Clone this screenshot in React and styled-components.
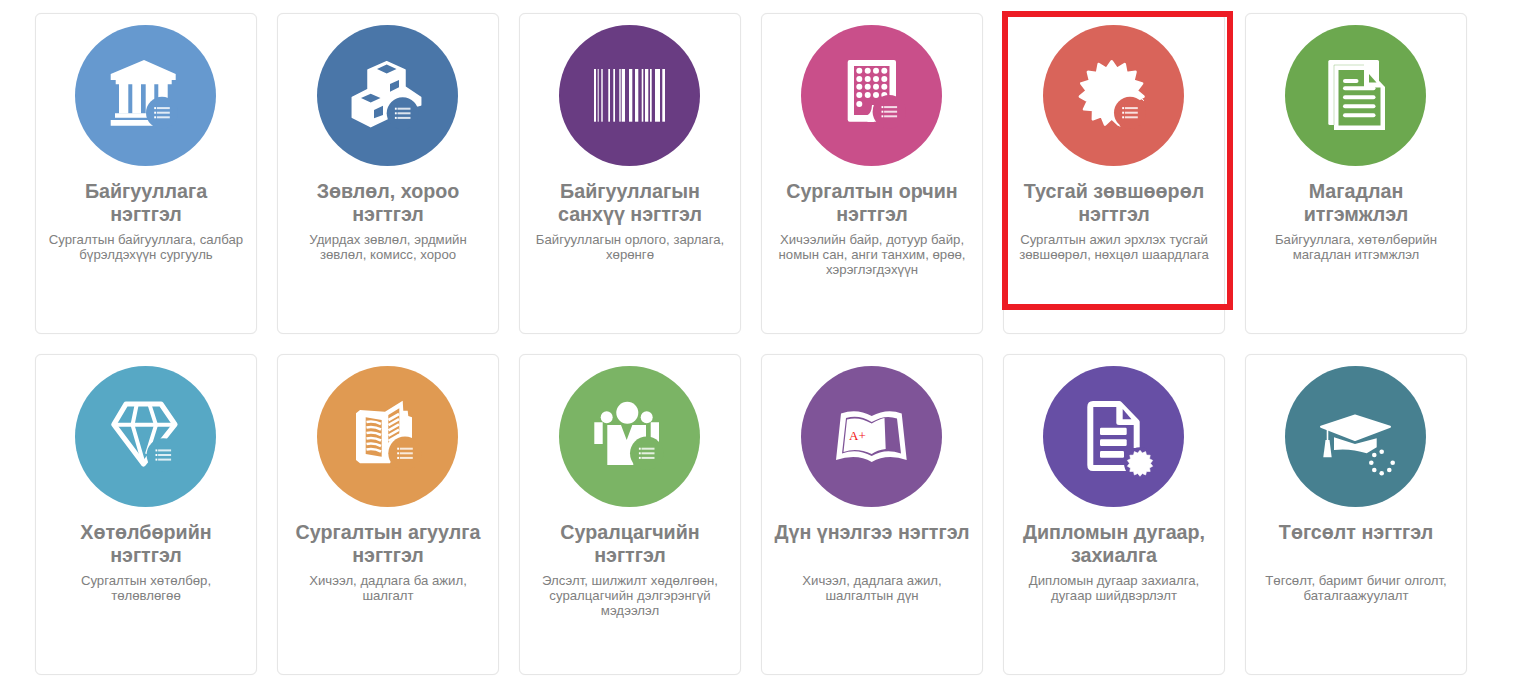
import React from 'react';
import styled, { createGlobalStyle } from 'styled-components';

const GlobalStyle = createGlobalStyle`
    html, body {
        margin: 0;
        padding: 0;
        background: #fff;
        font-family: "Liberation Sans", Arial, sans-serif;
    }
`

const star = (cx, cy, R, r, n) => {
    const pts = [];
    for (let i = 0; i < n * 2; i++) {
        const rad = i % 2 === 0 ? R : r;
        const a = (Math.PI * i) / n - Math.PI / 2;
        pts.push(`${(cx + rad * Math.cos(a)).toFixed(1)},${(cy + rad * Math.sin(a)).toFixed(1)}`);
    }
    return pts.join(' ');
};

// small list mark sitting in a cut-out of the icon
const Badge = ({ cx, cy, r = 16 }) => (
    <g>
        <circle cx={cx} cy={cy} r={r} fill="currentColor" />
        {[-4.6, 0, 4.6].map(d => (
            <g key={d} fill="#fff">
                <rect x={cx - 7.8} y={cy - 1 + d} width="1.8" height="2" />
                <rect x={cx - 5.2} y={cy - 1 + d} width="13" height="2" opacity=".8" />
            </g>
        ))}
    </g>
);

const BankIcon = () => (
    <>
        <path d="M69 35 L100.7 49 V55 H96.7 V59.3 H40.7 V55 H35.7 V49 Z" fill="#fff" />
        <path d="M44 59 H53.3 V88.5 H44 Z M57.3 59 H66 V88.5 H57.3 Z M70.7 59 H79.3 V88.5 H70.7 Z M83.3 59 H92.7 V88.5 H83.3 Z" fill="#fff" />
        <path d="M40 88.3 H92 V92.7 H40 Z M35.7 95 H92 V100.7 H35.7 Z" fill="#fff" />
        <Badge cx={87} cy={87.7} r={16} />
    </>
);

const CubesIcon = () => (
    <>
        <path d="M51 45 L69.7 36.7 L88 45 V62 L103.7 72.3 V80 L85 85 L71 93.3 L53.7 101.7 L35.3 92.3 V72.3 L51 64.3 Z" fill="#fff" strokeLinejoin="round" stroke="#fff" strokeWidth="1.5" />
        <path d="M60 44 L69.7 39.5 L79.5 44 L69.7 48.5 Z M73 59 L82 55 V62.3 L73 66.7 Z M44 73 L53.7 68.8 L63.5 73 L53.7 77.5 Z M57 85 L66 80.7 V90 L57 93.3 Z" fill="currentColor" />
        <Badge cx={85.7} cy={88.3} r={16} />
    </>
);

const BARS = [
    [35, 2], [38.7, 1], [42.3, 1.4], [49.3, 1.7], [54.3, 1.7], [60.3, 1.4], [62.7, 3.3],
    [70, 3.3], [76, 3.3], [82.7, 1.6], [86, 3.3], [91, 1.7], [96, 5], [103.3, 2.7],
];

const BarcodeIcon = () => (
    <>
        {BARS.map(([x, w]) => <rect key={x} x={x} y="44" width={w} height="52.7" fill="#fff" />)}
    </>
);

const BuildingIcon = () => (
    <>
        <rect x="46.7" y="35" width="48.3" height="61.7" rx="2" fill="#fff" />
        <rect x="53" y="41" width="35.5" height="49" fill="currentColor" />
        <path d="M73 80 H71 Q70.5 88 66.5 90 V97 H73 Z" fill="#fff" />
        {[45.7, 54, 61.7, 70].map(y => [58.3, 66.7, 75, 83.3].map(x => (
            <circle key={`${x}-${y}`} cx={x} cy={y} r="3" fill="#fff" />
        )))}
        <circle cx="58.3" cy="79" r="3" fill="#fff" />
        <Badge cx={88.3} cy={86.7} r={16.7} />
    </>
);

const SealIcon = () => (
    <>
        <polygon points={star(68.7, 68.3, 32, 25, 15)} fill="#fff" stroke="#fff" strokeWidth="2.6" strokeLinejoin="round" />
        <path d="M101 75.7 A17 17 0 0 0 72 91 Q73 98 77 101.7" fill="none" stroke="#fff" strokeWidth="1" />
        <Badge cx={87} cy={87.7} r={16} />
    </>
);

const PapersIcon = () => (
    <>
        <rect x="43.3" y="35" width="50.7" height="65" rx="1.5" fill="#fff" />
        <path d="M49 40 H79 L100 62 V105 H49 Z" fill="#fff" />
        <path d="M49 100 V40 H79" fill="none" stroke="currentColor" strokeWidth=".6" opacity=".6" />
        <path d="M53.5 45 H79 V62.5 H95.5 V100.5 H53.5 Z" fill="currentColor" />
        <path d="M84 49 L91.5 57.5 H84 Z" fill="currentColor" />
        {[63.3, 72.3, 81.3, 90.3].map(y => (
            <line key={y} x1="60" x2="88.5" y1={y} y2={y} stroke="#fff" strokeWidth="4" strokeLinecap="round" />
        ))}
        <line x1="60" x2="71.5" y1="56" y2="56" stroke="#fff" strokeWidth="4" strokeLinecap="round" />
    </>
);

const DiamondIcon = () => (
    <>
        <path d="M51 38 H86 L100 58.5 L68.5 98 L38.8 58.5 Z" fill="none" stroke="#fff" strokeWidth="5.2" strokeLinejoin="round" />
        <path d="M39 58.7 H100" stroke="#fff" strokeWidth="4" />
        <path d="M62 37 L57.5 59 L68.5 97" fill="none" stroke="#fff" strokeWidth="4" />
        <path d="M74 37 L81 59 L72 88" fill="none" stroke="#fff" strokeWidth="4" />
        <Badge cx={88.3} cy={89} r={16.7} />
    </>
);

const ReadingIcon = () => (
    <>
        <path d="M39 47.3 L43 44 L68 45.7 L85.7 34.7 L86.3 44.7 H90.7 L91.3 50 L95 51.3 V72.3 L82 80 L73 97.3 H43 L39 94 Z" fill="#fff" />
        <path d="M48.7 51.3 L64.7 54 V90.7 L48.7 88 Z M71.3 49 L82.3 42.3 V67.3 L71.3 76.7 Z" fill="currentColor" />
        {[0, 1, 2, 3, 4, 5].map(i => (
            <path key={i} d={`M49.5 ${56 + i * 5.5} Q57 ${54.5 + i * 5.5} 64 ${58 + i * 5.5}`} fill="none" stroke="#fff" strokeWidth="2.6" />
        ))}
        {[0, 1, 2, 3, 4].map(i => (
            <path key={i} d={`M71.5 ${54 + i * 5.2} L82 ${48 + i * 5.2}`} fill="none" stroke="#fff" strokeWidth="2.6" />
        ))}
        <Badge cx={88} cy={87.3} r={16.7} />
    </>
);

const PeopleIcon = () => (
    <>
        <circle cx="68.3" cy="46.7" r="11" fill="#fff" />
        <circle cx="47.7" cy="51.3" r="6" fill="#fff" />
        <circle cx="87.7" cy="51.3" r="6" fill="#fff" />
        <path d="M35.3 56.3 H43.7 V78 H35.3 Z M91.7 56.3 H100 V78 H91.7 Z" fill="#fff" />
        <path d="M48.3 59 H62 L67.7 74 L73.3 59 H87 V84 H74.3 V99 H48.3 Z" fill="#fff" />
        <Badge cx={87.7} cy={87.3} r={16.7} />
    </>
);

const GradeText = styled.text`
    font-family: "Liberation Serif", "Times New Roman", serif;
    font-size: 13px;
    fill: #f01010;
`

const OpenBookIcon = () => (
    <>
        <path d="M35 94 L40 47.5 Q56 42 70.7 50 Q86 42 100.7 47.5 L105.7 94 Q86 87 70.7 96 Q56 87 35 94 Z" fill="#fff" />
        <path d="M41 87.5 L45 52 Q58 48 70.7 56 Q84 48 96 52.5 L100 87.5 Q84 82 70.7 90 Q56 82 41 87.5 Z" fill="currentColor" />
        <path d="M42.5 86 L46 53.5 Q58 50 70.7 57.5 Q78 53 83.5 52 L84.7 83 Q76 84 70.7 88 Q56 81 42.5 86 Z" fill="#fff" />
        <GradeText x="48" y="74">A+</GradeText>
    </>
);

const CertificateIcon = () => (
    <>
        <path d="M90 102 H50 Q47.3 102 47.3 99 V41 Q47.3 38 50 38 H76.3 L93.7 56 V82" fill="none" stroke="#fff" strokeWidth="6" strokeLinejoin="round" />
        <path d="M73.3 38 V56.5 Q73.3 59 76 59 H93.7 V56 L76.3 38 Z" fill="#fff" />
        <path d="M79.7 43 L88.5 53.3 H79.7 Z" fill="currentColor" />
        <rect x="57" y="61.7" width="26.7" height="7.3" rx="1.2" fill="#fff" />
        <rect x="57" y="73.3" width="26.7" height="6.7" rx="1.2" fill="#fff" />
        <rect x="57" y="85" width="24" height="6.7" rx="1.2" fill="#fff" />
        <circle cx="97" cy="97.3" r="16" fill="currentColor" />
        <polygon points={star(97, 97.3, 13, 10.5, 14)} fill="#fff" stroke="#fff" strokeWidth=".6" strokeLinejoin="round" />
    </>
);

const DOTS = [[96.7, 85.7], [89.3, 89], [86.3, 96.7], [89.3, 104], [96.7, 107.3], [104.3, 104], [107.7, 96.7]];

const CapIcon = () => (
    <>
        <path d="M36 60.7 L70 49.5 L105 60.7 L70 74 Z" fill="#fff" stroke="#fff" strokeWidth="2" strokeLinejoin="round" />
        <path d="M49 71.3 L70 78 L91.7 72.3 V81.3 L81.7 87.3 Q65 82 49 84 Z" fill="#fff" />
        <path d="M42.5 62 V75" stroke="#fff" strokeWidth="1.6" />
        <path d="M40.5 74 H44.5 L46.7 91.3 H38.3 Z" fill="#fff" />
        {DOTS.map(([x, y]) => <circle key={x + '-' + y} cx={x} cy={y} r="2.3" fill="#fff" />)}
    </>
);

const ITEMS = [
    { id: 1, color: '#6699cf', Icon: BankIcon, title: ['Байгууллага', 'нэгтгэл'], desc: ['Сургалтын байгууллага, салбар', 'бүрэлдэхүүн сургууль'] },
    { id: 2, color: '#4a76a8', Icon: CubesIcon, title: ['Зөвлөл, хороо', 'нэгтгэл'], desc: ['Удирдах зөвлөл, эрдмийн', 'зөвлөл, комисс, хороо'] },
    { id: 3, color: '#693c82', Icon: BarcodeIcon, title: ['Байгууллагын', 'санхүү нэгтгэл'], desc: ['Байгууллагын орлого, зарлага,', 'хөрөнгө'] },
    { id: 4, color: '#c94f8a', Icon: BuildingIcon, title: ['Сургалтын орчин', 'нэгтгэл'], desc: ['Хичээлийн байр, дотуур байр,', 'номын сан, анги танхим, өрөө,', 'хэрэглэгдэхүүн'] },
    { id: 5, color: '#d9645a', Icon: SealIcon, marked: true, title: ['Тусгай зөвшөөрөл', 'нэгтгэл'], desc: ['Сургалтын ажил эрхлэх тусгай', 'зөвшөөрөл, нөхцөл шаардлага'] },
    { id: 6, color: '#6ca84f', Icon: PapersIcon, title: ['Магадлан', 'итгэмжлэл'], desc: ['Байгууллага, хөтөлбөрийн', 'магадлан итгэмжлэл'] },
    { id: 7, color: '#57a8c5', Icon: DiamondIcon, title: ['Хөтөлбөрийн', 'нэгтгэл'], desc: ['Сургалтын хөтөлбөр,', 'төлөвлөгөө'] },
    { id: 8, color: '#e09a52', Icon: ReadingIcon, title: ['Сургалтын агуулга', 'нэгтгэл'], desc: ['Хичээл, дадлага ба ажил,', 'шалгалт'] },
    { id: 9, color: '#7bb465', Icon: PeopleIcon, title: ['Суралцагчийн', 'нэгтгэл'], desc: ['Элсэлт, шилжилт хөдөлгөөн,', 'суралцагчийн дэлгэрэнгүй', 'мэдээлэл'] },
    { id: 10, color: '#7f5498', Icon: OpenBookIcon, title: ['Дүн үнэлгээ нэгтгэл'], desc: ['Хичээл, дадлага ажил,', 'шалгалтын дүн'] },
    { id: 11, color: '#674fa5', Icon: CertificateIcon, title: ['Дипломын дугаар,', 'захиалга'], desc: ['Дипломын дугаар захиалга,', 'дугаар шийдвэрлэлт'] },
    { id: 12, color: '#478090', Icon: CapIcon, title: ['Төгсөлт нэгтгэл'], desc: ['Төгсөлт, баримт бичиг олголт,', 'баталгаажуулалт'] },
];

const App = () => (
    <Page>
        <GlobalStyle />
        <CardGrid>
            {ITEMS.map(item => (
                <Card key={item.id}>
                    <IconCircle $color={item.color}>
                        <svg width="141" height="141" viewBox="0 0 141 141">
                            <item.Icon />
                        </svg>
                    </IconCircle>
                    <CardTitle>
                        {item.title.map(line => <TextLine key={line}>{line}</TextLine>)}
                    </CardTitle>
                    <CardDesc>
                        {item.desc.map(line => <TextLine key={line}>{line}</TextLine>)}
                    </CardDesc>
                    {item.marked && <RedMark />}
                </Card>
            ))}
        </CardGrid>
    </Page>
);

const Page = styled.div`
    height: 687px;
    overflow: hidden;
    padding: 13px 0 0 35px;
    box-sizing: border-box;
`

const CardGrid = styled.div`
    display: grid;
    grid-template-columns: repeat(6, 222px);
    grid-auto-rows: 321px;
    column-gap: 20px;
    row-gap: 20px;
`

const Card = styled.div`
    position: relative;
    box-sizing: border-box;
    display: flex;
    flex-direction: column;
    align-items: center;
    padding-top: 11px;
    background: #fff;
    border: 1px solid #e6e6e6;
    border-radius: 6px;
    box-shadow: 0 0 1px rgba(0, 0, 0, .08);
`

const IconCircle = styled.div`
    flex: none;
    width: 141px;
    height: 141px;
    margin-right: 1px;
    margin-bottom: 13.5px;
    border-radius: 50%;
    background: ${props => props.$color};
    color: ${props => props.$color};

    svg {
        display: block;
    }
`

const CardTitle = styled.div`
    height: 48px;
    margin-bottom: 4.5px;
    font-size: 19.7px;
    font-weight: bold;
    line-height: 23.5px;
    color: #808080;
    text-align: center;
`

const CardDesc = styled.div`
    font-size: 13.2px;
    line-height: 15px;
    color: #808080;
    text-align: center;
`

const TextLine = styled.span`
    display: block;
    white-space: nowrap;
`

const RedMark = styled.div`
    position: absolute;
    top: -3px;
    left: -2px;
    width: 231px;
    height: 299px;
    box-sizing: border-box;
    border: 6px solid #ed1c24;
`

export default App;
